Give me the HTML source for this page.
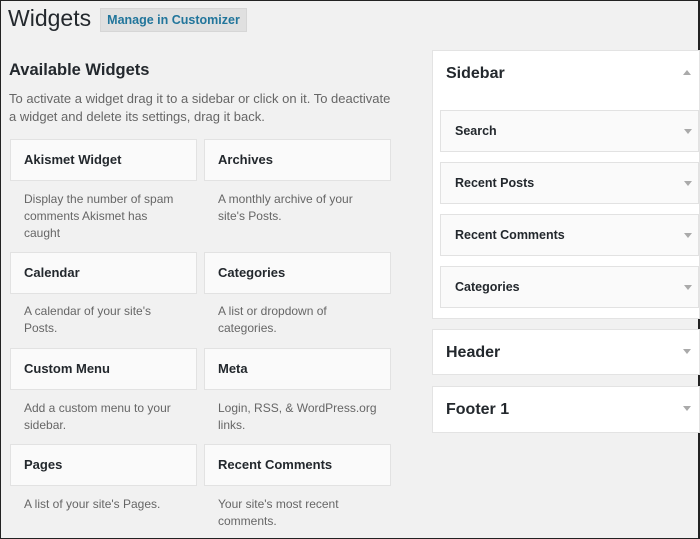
<!DOCTYPE html>
<html><head><style>
*{margin:0;padding:0;box-sizing:border-box}
body{width:700px;height:539px;background:#f1f1f1;font-family:"Liberation Sans",sans-serif;color:#23282d;position:relative;overflow:hidden;border:1px solid #222;border-right:2px solid #222}
.a{position:absolute}
.box{position:absolute;background:#fafafa;border:1px solid #e2e2e2;font-size:13px;font-weight:bold;padding-left:13px;line-height:40px;color:#23282d}
.d{position:absolute;font-size:12px;line-height:17px;color:#666}
.panel{position:absolute;background:#fff;border:1px solid #e3e3e3}
.ph{position:absolute;left:13px;font-size:16px;font-weight:bold;color:#23282d}
.si{position:absolute;left:7px;right:0;height:42px;background:#fafafa;border:1px solid #e2e2e2;font-size:12.5px;font-weight:bold;line-height:40px;padding-left:14px}
.ar{position:absolute;right:6px;width:0;height:0;border-left:4px solid transparent;border-right:4px solid transparent;border-top:5px solid #aaa}
.up{border-top:0;border-bottom:5px solid #aaa}
</style></head><body>
<div class="a" style="left:7px;top:4px;font-size:23px;color:#23282d">Widgets</div>
<div class="a" style="left:99px;top:7px;width:147px;height:24px;background:#e0e0e0;border:1px solid #d6d6d6;color:#21759b;font-size:12.5px;font-weight:bold;line-height:22px;text-align:center">Manage in Customizer</div>
<div class="a" style="left:8px;top:60px;font-size:16.5px;font-weight:bold">Available Widgets</div>
<div class="d" style="left:8px;top:89px;font-size:13px;line-height:18px;color:#666;width:430px;white-space:nowrap">To activate a widget drag it to a sidebar or click on it. To deactivate<br>a widget and delete its settings, drag it back.</div>

<div class="box" style="left:9px;top:138px;width:187px;height:42px">Akismet Widget</div>
<div class="box" style="left:203px;top:138px;width:187px;height:42px">Archives</div>
<div class="d" style="left:23px;top:190px;width:152px">Display the number of spam comments Akismet has caught</div>
<div class="d" style="left:217px;top:190px;width:152px">A monthly archive of your site's Posts.</div>

<div class="box" style="left:9px;top:251px;width:187px;height:42px">Calendar</div>
<div class="box" style="left:203px;top:251px;width:187px;height:42px">Categories</div>
<div class="d" style="left:23px;top:302px;width:140px">A calendar of your site's Posts.</div>
<div class="d" style="left:217px;top:302px;width:150px">A list or dropdown of categories.</div>

<div class="box" style="left:9px;top:347px;width:187px;height:42px">Custom Menu</div>
<div class="box" style="left:203px;top:347px;width:187px;height:42px">Meta</div>
<div class="d" style="left:23px;top:399px;width:165px">Add a custom menu to your sidebar.</div>
<div class="d" style="left:217px;top:399px;width:170px">Login, RSS, &amp; WordPress.org links.</div>

<div class="box" style="left:9px;top:443px;width:187px;height:42px">Pages</div>
<div class="box" style="left:203px;top:443px;width:187px;height:42px">Recent Comments</div>
<div class="d" style="left:23px;top:495px;width:165px">A list of your site's Pages.</div>
<div class="d" style="left:217px;top:495px;width:165px">Your site's most recent comments.</div>

<div class="panel" style="left:431px;top:49px;width:268px;height:269px">
 <div class="ph" style="top:14px">Sidebar</div><div class="ar up" style="top:19px;right:8px"></div>
 <div class="si" style="top:59px">Search<div class="ar" style="top:18px"></div></div>
 <div class="si" style="top:111px">Recent Posts<div class="ar" style="top:18px"></div></div>
 <div class="si" style="top:163px">Recent Comments<div class="ar" style="top:18px"></div></div>
 <div class="si" style="top:215px">Categories<div class="ar" style="top:18px"></div></div>
</div>
<div class="panel" style="left:431px;top:328px;width:268px;height:46px">
 <div class="ph" style="top:14px">Header</div><div class="ar" style="top:19px;right:8px"></div>
</div>
<div class="panel" style="left:431px;top:385px;width:268px;height:47px">
 <div class="ph" style="top:14px">Footer 1</div><div class="ar" style="top:19px;right:8px"></div>
</div>
</body></html>
